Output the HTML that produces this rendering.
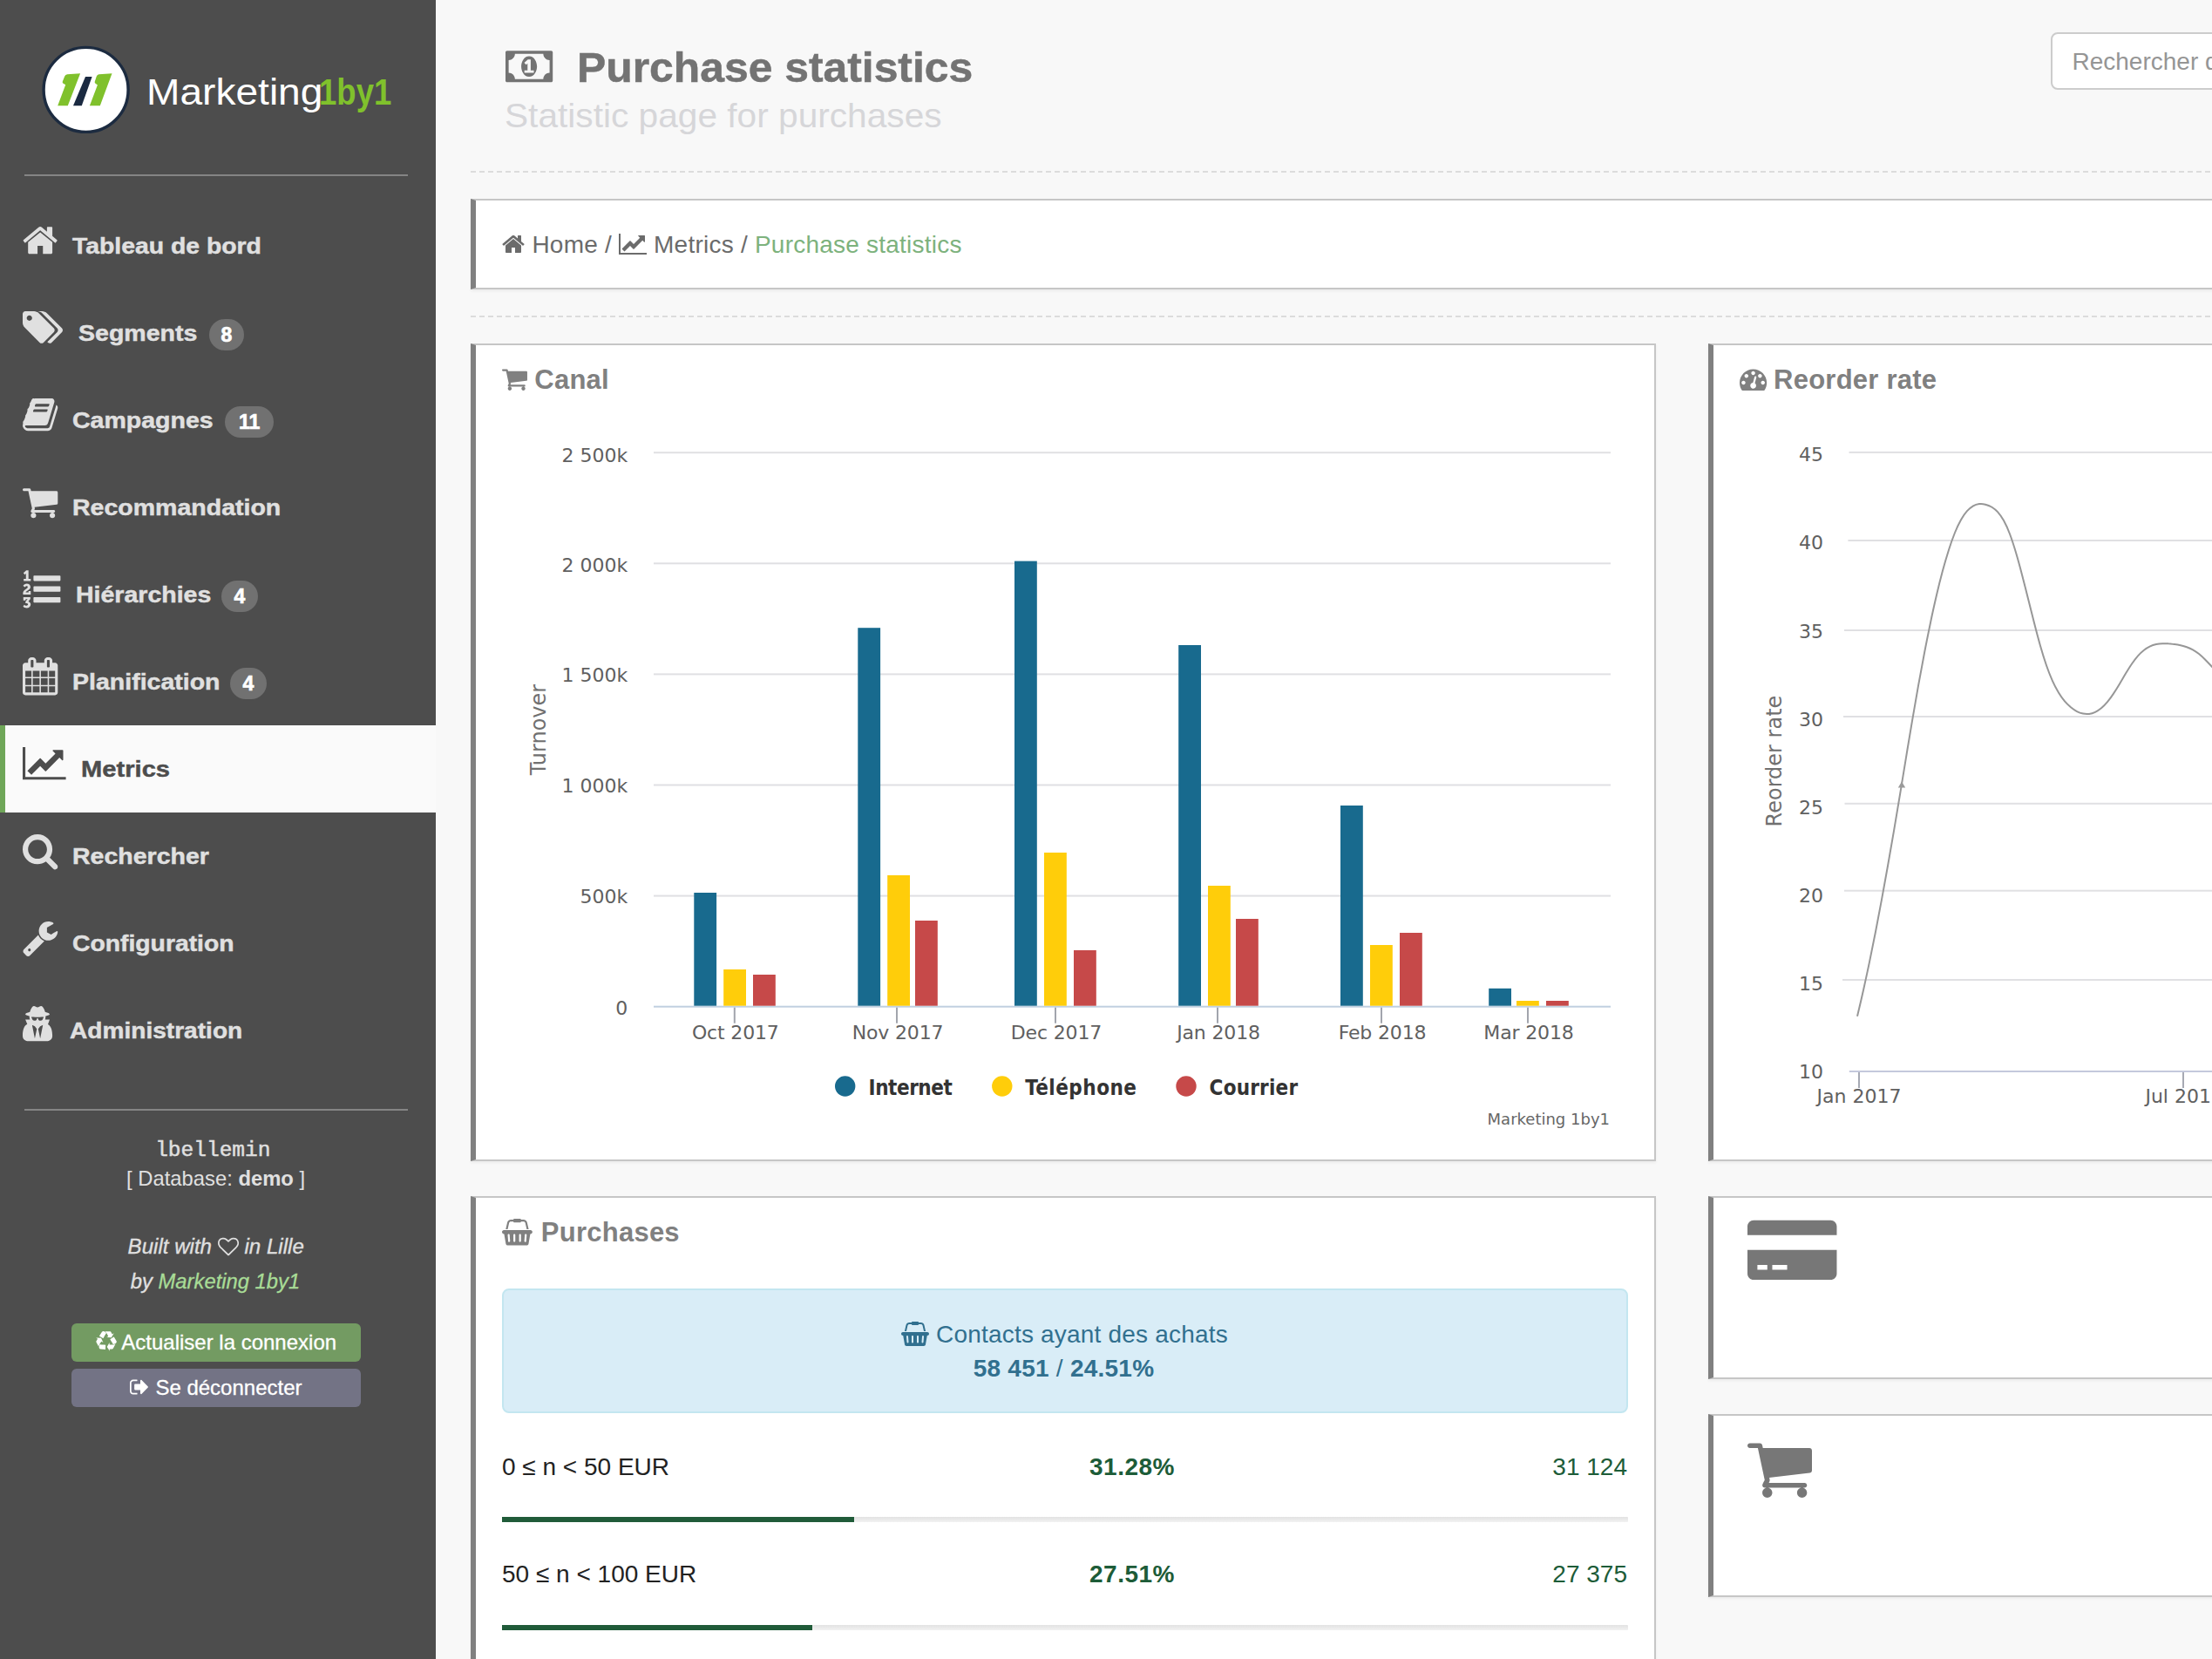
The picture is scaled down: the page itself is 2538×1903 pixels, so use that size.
<!DOCTYPE html>
<html lang="fr"><head><meta charset="utf-8"><title>Purchase statistics</title>
<style>
html,body{margin:0;padding:0;}
body{width:2538px;height:1903px;overflow:hidden;background:#f8f8f8;position:relative;font-family:"Liberation Sans",sans-serif;}
.t{position:absolute;white-space:nowrap;line-height:1;}
.sans{font-family:"Liberation Sans",sans-serif;}
.dv{font-family:"DejaVu Sans",sans-serif;}
.mono{font-family:"Liberation Mono",monospace;}
.b{font-weight:bold;}
.ic{position:absolute;display:block;overflow:visible;}
.abs{position:absolute;}
#side{position:absolute;left:0;top:0;width:500px;height:1903px;background:#4d4d4d;}
.hr{position:absolute;left:28px;width:440px;height:2px;background:#858585;}
.mi{color:#e0e0e0;font-weight:bold;}
.badge{position:absolute;height:36px;border-radius:18px;background:#717171;color:#fff;font-weight:bold;font-size:23px;line-height:36px;text-align:center;-webkit-text-stroke:0.7px #fff;}
.panel{position:absolute;background:#fff;border:2px solid #c6c6c6;border-left:6px solid #808080;box-sizing:border-box;box-shadow:0 2px 3px rgba(0,0,0,.05);}
.dash{position:absolute;left:540px;right:0;height:2px;background:repeating-linear-gradient(90deg,#dcdcdc 0,#dcdcdc 6px,transparent 6px,transparent 10px);}
.btn{position:absolute;left:82px;width:332px;height:43.5px;border-radius:6px;}
svg text{font-family:"DejaVu Sans",sans-serif;}
</style></head><body>

<div id="side">
<svg class="abs" style="left:0;top:0" width="200" height="200" viewBox="0 0 200 200">
<circle cx="98.6" cy="102.9" r="48.5" fill="#fff" stroke="#1c2b40" stroke-width="3.4"/>
<path fill="#80c12c" d="M77.2,85.2 L92.1,84.2 L77.8,121.3 L66.2,121.3 L75.2,97.3 L72.2,95.4 Q71.4,94.8 71.8,93.6 L74.2,87.4 Q75,85.4 77.2,85.2Z"/>
<path fill="#1b2a41" d="M98,88 L105.6,88 L93.8,121.3 L84,121.3Z"/>
<path fill="#80c12c" d="M113.5,85.2 L128.5,84.2 L114.8,121.3 L102.9,121.3 L111.9,97.5 L109.2,95.4 Q108.4,94.8 108.8,93.6 L110.8,87.4 Q111.5,85.4 113.5,85.2Z"/>
</svg>
<div class="t sans" style="left:168px;top:83.6px;font-size:43px;color:#fff;"><span id="lg1" style="display:inline-block;transform-origin:0 0;transform:scaleX(1.072)">Marketing</span></div>
<div class="t sans b" style="left:366.3px;top:83.6px;font-size:43px;color:#80c12c;"><span id="lg2" style="display:inline-block;transform-origin:0 0;transform:scaleX(0.85)">1by1</span></div>
<div class="hr" style="top:199.5px"></div>
<div class="abs" style="left:0;top:832px;width:500px;height:100px;background:#fafafa;border-left:6px solid #6fa658;box-sizing:border-box"></div>
<svg class="ic" style="left:26.40px;top:253.80px;width:40.30px;height:43.40px;" viewBox="0 0 1664 1792"><path fill="#e0e0e0" d="M1408 992C1408 990 1408 988 1407 986L832 512L257 986C257 988 256 990 256 992V1472C256 1507 285 1536 320 1536H704V1152H960V1536H1344C1379 1536 1408 1507 1408 1472ZM1631 923C1642 910 1640 889 1627 878L1408 696V288C1408 270 1394 256 1376 256H1184C1166 256 1152 270 1152 288V483L908 279C866 244 798 244 756 279L37 878C24 889 22 910 33 923L95 997C100 1003 108 1007 116 1008C125 1009 133 1006 140 1001L832 424L1524 1001C1530 1006 1537 1008 1545 1008C1546 1008 1547 1008 1548 1008C1556 1007 1564 1003 1569 997L1631 923Z"/></svg>
<div class="t sans b" id="m0" style="left:83.4px;top:268.57px;font-size:26.5px;color:#e0e0e0;-webkit-text-stroke:0.45px #e0e0e0;transform-origin:0 0;transform:scaleX(1.07)">Tableau de bord</div>
<svg class="ic" style="left:26.40px;top:353.80px;width:46.50px;height:43.40px;" viewBox="0 0 1920 1792"><path fill="#e0e0e0" d="M448 448C448 519 391 576 320 576C249 576 192 519 192 448C192 377 249 320 320 320C391 320 448 377 448 448ZM1515 1024C1515 990 1501 957 1478 933L763 219C712 168 615 128 544 128H128C58 128 0 186 0 256V672C0 743 40 840 91 890L806 1606C829 1629 862 1643 896 1643C930 1643 963 1629 987 1606L1478 1114C1501 1091 1515 1058 1515 1024ZM1899 1024C1899 990 1885 957 1862 933L1147 219C1096 168 999 128 928 128H704C775 128 872 168 923 219L1638 933C1661 957 1675 990 1675 1024C1675 1058 1661 1091 1638 1114L1168 1584C1202 1619 1228 1643 1280 1643C1314 1643 1347 1629 1371 1606L1862 1114C1885 1091 1899 1058 1899 1024Z"/></svg>
<div class="t sans b" id="m1" style="left:89.6px;top:368.57px;font-size:26.5px;color:#e0e0e0;-webkit-text-stroke:0.45px #e0e0e0;transform-origin:0 0;transform:scaleX(1.076)">Segments</div>
<div class="badge" id="b1" style="left:240px;top:366px;width:40px">8</div>
<svg class="ic" style="left:26.40px;top:454.30px;width:40.30px;height:43.40px;" viewBox="0 0 1664 1792"><path fill="#e0e0e0" d="M1639 478C1624 458 1603 444 1580 435C1581 453 1581 473 1575 492L1275 1479C1264 1515 1221 1536 1184 1536H261C206 1536 137 1524 117 1466C109 1444 110 1435 118 1423C127 1411 143 1408 156 1408H1025C1152 1408 1178 1374 1225 1220L1499 314C1513 267 1507 220 1481 184C1456 149 1414 128 1367 128H606C589 128 572 133 555 137L556 134C429 98 421 235 379 297C363 320 339 340 335 359C332 377 342 394 340 411C334 464 294 559 270 592C255 612 233 622 226 645C220 661 230 684 228 705C223 752 188 841 161 887C151 905 132 919 127 938C122 955 132 977 127 996C116 1048 82 1129 52 1179C36 1206 15 1223 11 1247C9 1259 18 1272 17 1288C16 1312 12 1332 10 1352C-4 1390 -4 1434 12 1479C49 1583 158 1664 260 1664H1183C1269 1664 1357 1598 1382 1513L1657 607C1671 561 1664 514 1639 478ZM575 480 596 416C602 398 621 384 638 384H1246C1264 384 1274 398 1268 416L1247 480C1241 498 1222 512 1205 512H597C579 512 569 498 575 480ZM492 736 513 672C519 654 538 640 555 640H1163C1181 640 1191 654 1185 672L1164 736C1158 754 1139 768 1122 768H514C496 768 486 754 492 736Z"/></svg>
<div class="t sans b" id="m2" style="left:83.4px;top:469.07px;font-size:26.5px;color:#e0e0e0;-webkit-text-stroke:0.45px #e0e0e0;transform-origin:0 0;transform:scaleX(1.076)">Campagnes</div>
<div class="badge" id="b2" style="left:258.4px;top:466px;width:55.6px">11</div>
<svg class="ic" style="left:26.40px;top:554.30px;width:40.30px;height:43.40px;" viewBox="0 0 1664 1792"><path fill="#e0e0e0" d="M640 1536C640 1466 582 1408 512 1408C442 1408 384 1466 384 1536C384 1606 442 1664 512 1664C582 1664 640 1606 640 1536ZM1536 1536C1536 1466 1478 1408 1408 1408C1338 1408 1280 1466 1280 1536C1280 1606 1338 1664 1408 1664C1478 1664 1536 1606 1536 1536ZM1664 448C1664 413 1635 384 1600 384H399C389 336 387 256 320 256H64C29 256 0 285 0 320C0 355 29 384 64 384H268L445 1207C429 1238 384 1313 384 1344C384 1379 413 1408 448 1408H1472C1507 1408 1536 1379 1536 1344C1536 1309 1507 1280 1472 1280H552C562 1260 576 1239 576 1216C576 1192 568 1169 563 1146L1607 1024C1639 1020 1664 992 1664 960Z"/></svg>
<div class="t sans b" id="m3" style="left:83.4px;top:569.07px;font-size:26.5px;color:#e0e0e0;-webkit-text-stroke:0.45px #e0e0e0;transform-origin:0 0;transform:scaleX(1.076)">Recommandation</div>
<svg class="ic" style="left:26.40px;top:654.30px;width:43.40px;height:43.40px;" viewBox="0 0 1792 1792"><path fill="#e0e0e0" d="M381 1620C381 1551 337 1499 270 1483L365 1368V1280H32V1432H138V1379C170 1379 203 1377 235 1377V1378C192 1417 159 1468 123 1514L149 1570C190 1567 254 1570 254 1626C254 1666 217 1683 182 1683C144 1683 103 1663 76 1638L19 1726C64 1771 128 1792 191 1792C295 1792 381 1730 381 1620ZM383 993H278V1053H151C154 975 371 942 371 794C371 695 291 640 198 640C122 640 54 679 21 748L106 807C123 779 152 749 187 749C220 749 241 767 241 801C241 885 15 913 15 1098C15 1116 18 1134 21 1152H383ZM1792 1312C1792 1294 1777 1280 1760 1280H544C526 1280 512 1294 512 1312V1504C512 1521 526 1536 544 1536H1760C1777 1536 1792 1521 1792 1504ZM384 413H276V9H170L34 136L105 212C124 195 144 180 155 158H157V170C157 251 156 332 156 413H49V512H384ZM1792 800C1792 782 1777 768 1760 768H544C526 768 512 782 512 800V992C512 1009 526 1024 544 1024H1760C1777 1024 1792 1009 1792 992ZM1792 288C1792 271 1777 256 1760 256H544C526 256 512 271 512 288V480C512 497 526 512 544 512H1760C1777 512 1792 497 1792 480Z"/></svg>
<div class="t sans b" id="m4" style="left:86.5px;top:669.07px;font-size:26.5px;color:#e0e0e0;-webkit-text-stroke:0.45px #e0e0e0;transform-origin:0 0;transform:scaleX(1.076)">Hiérarchies</div>
<div class="badge" id="b4" style="left:254px;top:666px;width:42px">4</div>
<svg class="ic" style="left:26.40px;top:754.30px;width:40.30px;height:43.40px;" viewBox="0 0 1664 1792"><path fill="#e0e0e0" d="M128 1664V1376H416V1664ZM480 1664V1376H800V1664ZM128 1312V992H416V1312ZM480 1312V992H800V1312ZM128 928V640H416V928ZM864 1664V1376H1184V1664ZM480 928V640H800V928ZM1248 1664V1376H1536V1664ZM864 1312V992H1184V1312ZM512 448C512 465 497 480 480 480H416C399 480 384 465 384 448V160C384 143 399 128 416 128H480C497 128 512 143 512 160V448ZM1248 1312V992H1536V1312ZM864 928V640H1184V928ZM1248 928V640H1536V928ZM1280 448C1280 465 1265 480 1248 480H1184C1167 480 1152 465 1152 448V160C1152 143 1167 128 1184 128H1248C1265 128 1280 143 1280 160V448ZM1664 384C1664 314 1606 256 1536 256H1408V160C1408 72 1336 0 1248 0H1184C1096 0 1024 72 1024 160V256H640V160C640 72 568 0 480 0H416C328 0 256 72 256 160V256H128C58 256 0 314 0 384V1664C0 1734 58 1792 128 1792H1536C1606 1792 1664 1734 1664 1664Z"/></svg>
<div class="t sans b" id="m5" style="left:83.4px;top:769.07px;font-size:26.5px;color:#e0e0e0;-webkit-text-stroke:0.45px #e0e0e0;transform-origin:0 0;transform:scaleX(1.076)">Planification</div>
<div class="badge" id="b5" style="left:264px;top:766px;width:42px">4</div>
<svg class="ic" style="left:26.40px;top:854.30px;width:49.60px;height:43.40px;" viewBox="0 0 2048 1792"><path fill="#4d4d4d" d="M2048 1536H128V128H0V1664H2048ZM1920 288C1920 270 1906 256 1888 256H1453C1425 256 1410 290 1431 311L1552 432L1088 896L855 663C842 650 822 650 809 663L224 1248L416 1440L832 1024L1065 1257C1078 1270 1098 1270 1111 1257L1744 624L1865 745C1886 766 1920 751 1920 723Z"/></svg>
<div class="t sans b" id="m6" style="left:92.7px;top:869.07px;font-size:26.5px;color:#4d4d4d;-webkit-text-stroke:0.45px #4d4d4d;transform-origin:0 0;transform:scaleX(1.1)">Metrics</div>
<svg class="ic" style="left:26.40px;top:954.30px;width:40.30px;height:43.40px;" viewBox="0 0 1664 1792"><path fill="#e0e0e0" d="M1152 832C1152 1079 951 1280 704 1280C457 1280 256 1079 256 832C256 585 457 384 704 384C951 384 1152 585 1152 832ZM1664 1664C1664 1630 1650 1597 1627 1574L1284 1231C1365 1114 1408 974 1408 832C1408 443 1093 128 704 128C315 128 0 443 0 832C0 1221 315 1536 704 1536C846 1536 986 1493 1103 1412L1446 1754C1469 1778 1502 1792 1536 1792C1606 1792 1664 1734 1664 1664Z"/></svg>
<div class="t sans b" id="m7" style="left:83.4px;top:969.07px;font-size:26.5px;color:#e0e0e0;-webkit-text-stroke:0.45px #e0e0e0;transform-origin:0 0;transform:scaleX(1.076)">Rechercher</div>
<svg class="ic" style="left:26.40px;top:1054.30px;width:40.30px;height:43.40px;" viewBox="0 0 1664 1792"><path fill="#e0e0e0" d="M384 1472C384 1507 355 1536 320 1536C285 1536 256 1507 256 1472C256 1437 285 1408 320 1408C355 1408 384 1437 384 1472ZM1028 1052C897 1000 792 895 740 764L59 1445C35 1469 21 1502 21 1536C21 1570 35 1603 59 1626L165 1734C189 1757 222 1771 256 1771C290 1771 323 1757 346 1734L1028 1052ZM1662 617C1662 597 1650 582 1630 582C1610 582 1378 728 1345 747L1152 640V416L1445 247C1454 241 1461 230 1461 219C1461 207 1455 198 1445 191C1384 150 1289 128 1216 128C969 128 768 329 768 576C768 823 969 1024 1216 1024C1405 1024 1576 901 1639 723C1650 691 1662 650 1662 617Z"/></svg>
<div class="t sans b" id="m8" style="left:83.4px;top:1069.07px;font-size:26.5px;color:#e0e0e0;-webkit-text-stroke:0.45px #e0e0e0;transform-origin:0 0;transform:scaleX(1.068)">Configuration</div>
<svg class="ic" style="left:26.40px;top:1154.30px;width:37.20px;height:43.40px;" viewBox="0 0 1536 1792"><path fill="#e0e0e0" d="M576 1536 448 896 576 960 672 1088ZM832 1536 736 1088 832 960 960 896ZM992 526C991 535 990 544 988 553C982 561 977 558 973 570C947 641 935 696 845 696C716 696 752 577 710 577H698C656 577 692 696 563 696C473 696 461 641 435 570C431 558 426 561 420 553C418 544 417 535 416 526C417 524 418 522 420 520C429 513 501 512 516 512C573 512 627 520 683 531C690 533 697 533 704 533C711 533 718 533 725 531C781 520 835 512 892 512C907 512 979 513 988 520C990 522 991 524 992 526ZM1408 1405C1408 1227 1377 958 1198 865L1280 640H1066C1084 588 1091 534 1086 480C1125 472 1280 440 1280 384C1280 325 1110 293 1070 285C1049 210 999 96 948 37C928 14 903 0 872 0C812 0 764 62 704 62C644 62 596 0 536 0C505 0 480 14 460 37C409 96 359 210 338 285C298 293 128 325 128 384C128 440 283 472 322 480C321 490 320 501 320 512C320 556 328 599 342 640H128L218 860C32 950 0 1224 0 1405C0 1568 107 1664 267 1664H1141C1301 1664 1408 1568 1408 1405Z"/></svg>
<div class="t sans b" id="m9" style="left:80.3px;top:1169.07px;font-size:26.5px;color:#e0e0e0;-webkit-text-stroke:0.45px #e0e0e0;transform-origin:0 0;transform:scaleX(1.06)">Administration</div>
<div class="hr" style="top:1272px"></div>
<div class="t mono " style="top:1308.42px;font-size:24.5px;left:-355.70px;width:1200px;text-align:center;color:#e0e0e0;-webkit-text-stroke:0.45px #e0e0e0;">lbellemin</div>
<div class="t sans " style="top:1339.85px;font-size:23.8px;left:-352.40px;width:1200px;text-align:center;color:#e0e0e0;">[ Database: <b>demo</b> ]</div>
<div class="t sans " style="top:1417.60px;font-size:24.1px;left:-352.30px;width:1200px;text-align:center;color:#e0e0e0;-webkit-text-stroke:0.3px #e0e0e0;"><i>Built with <svg style="display:inline-block;width:24.10px;height:24.10px;vertical-align:-3.44px;" viewBox="0 0 1792 1792"><path fill="#e0e0e0" d="M1664 596C1664 779 1479 949 1476 952L896 1511L315 951C313 949 128 779 128 596C128 315 318 256 478 256C627 256 795 417 847 479C871 508 921 508 945 479C997 417 1165 256 1314 256C1474 256 1664 315 1664 596ZM1792 596C1792 303 1613 128 1314 128C1139 128 975 266 896 344C817 266 653 128 478 128C179 128 0 303 0 596C0 836 220 1037 228 1044L852 1646C864 1658 880 1664 896 1664C912 1664 928 1658 940 1646L1563 1046C1572 1037 1792 836 1792 596Z"/></svg> in Lille</i></div>
<div class="t sans " style="top:1457.85px;font-size:23.8px;left:-353.00px;width:1200px;text-align:center;color:#e0e0e0;-webkit-text-stroke:0.3px #e0e0e0;"><i>by <span style="color:#a8dc96;-webkit-text-stroke:0.3px #a8dc96">Marketing 1by1</span></i></div>
<div class="btn" style="top:1517.8px;height:44px;background:#739b62"></div>
<div class="t sans " style="top:1527.18px;font-size:24px;left:-352.00px;width:1200px;text-align:center;color:#fff;-webkit-text-stroke:0.3px #fff;"><svg style="display:inline-block;width:24.00px;height:24.00px;vertical-align:-3.43px;" viewBox="0 0 1792 1792"><path fill="#fff" d="M836 1169C404 1153 327 1141 327 1141C297 1230 245 1340 285 1433C304 1477 347 1526 399 1530L819 1559L821 1537L836 1169ZM449 583 16 566 156 652C77 777 42 840 42 840C42 840 7 903 46 961L236 1318C236 1318 257 1127 482 870L629 962ZM1680 1100C1680 1100 1510 1191 1171 1150L1164 977L953 1339L1183 1706L1175 1542C1323 1537 1394 1530 1394 1530C1394 1530 1466 1524 1492 1459L1680 1100ZM895 176C831 107 759 10 659 1C610 -4 547 12 519 56L294 412L313 424L630 611C848 238 895 176 895 176ZM1550 483 1531 494 1218 689C1449 1054 1483 1125 1483 1125C1573 1100 1693 1080 1747 996C1773 954 1789 891 1762 846ZM1407 257C1334 128 1295 67 1295 67C1295 67 1257 7 1187 13L782 12C782 12 941 122 1061 441L910 527L1329 547L1549 174Z"/></svg> Actualiser la connexion</div>
<div class="btn" style="top:1570px;background:#737385"></div>
<div class="t sans " style="top:1578.68px;font-size:24px;left:-352.00px;width:1200px;text-align:center;color:#fff;-webkit-text-stroke:0.3px #fff;"><svg style="display:inline-block;width:22.29px;height:24.00px;vertical-align:-3.43px;" viewBox="0 0 1664 1792"><path fill="#fff" d="M640 1440C640 1403 601 1408 576 1408H288C200 1408 128 1336 128 1248V544C128 456 200 384 288 384H608C653 384 640 316 640 288C640 271 625 256 608 256H288C129 256 0 385 0 544V1248C0 1407 129 1536 288 1536H608C653 1536 640 1468 640 1440ZM1568 896C1568 879 1561 863 1549 851L1005 307C993 295 977 288 960 288C925 288 896 317 896 352V640H448C413 640 384 669 384 704V1088C384 1123 413 1152 448 1152H896V1440C896 1475 925 1504 960 1504C977 1504 993 1497 1005 1485L1549 941C1561 929 1568 913 1568 896Z"/></svg> Se déconnecter</div>
</div>
<svg class="ic" style="left:579.60px;top:50.63px;width:54.21px;height:50.60px;" viewBox="0 0 1920 1792"><path fill="#737373" d="M768 1152V1056H896V768H894C878 793 863 804 839 825L762 745L910 608H1024V1056H1152V1152ZM1280 896C1280 714 1170 480 960 480C750 480 640 714 640 896C640 1078 750 1312 960 1312C1170 1312 1280 1078 1280 896ZM1792 1152C1651 1152 1536 1267 1536 1408H384C384 1267 269 1152 128 1152V640C269 640 384 525 384 384H1536C1536 525 1651 640 1792 640V1152ZM1920 320C1920 285 1891 256 1856 256H64C29 256 0 285 0 320V1472C0 1507 29 1536 64 1536H1856C1891 1536 1920 1507 1920 1472Z"/></svg>
<div class="t sans b" style="top:53.20px;font-size:48.2px;left:662.20px;color:#737373;-webkit-text-stroke:0.5px #737373;transform-origin:0 0;transform:scaleX(1.034);">Purchase statistics</div>
<div class="t sans " style="top:112.98px;font-size:39.6px;left:578.80px;color:#d6d6d9;transform-origin:0 0;transform:scaleX(1.027);">Statistic page for purchases</div>
<div class="abs" style="left:2352.8px;top:36.8px;width:300px;height:66.6px;box-sizing:border-box;border:2px solid #ccc;border-radius:8px;background:#fff"></div>
<div class="t sans " style="top:56.60px;font-size:28px;left:2377.50px;color:#959595;">Rechercher dans</div>
<div class="dash" style="top:196px"></div>
<div class="dash" style="top:362px"></div>
<div class="panel" style="left:540px;top:228px;width:2100px;height:103.5px"></div>
<div class="t sans " style="top:266.30px;font-size:28px;left:576.40px;color:#6b6b6b;letter-spacing:0.23px;"><svg style="display:inline-block;width:26.00px;height:28.00px;vertical-align:-4.00px;" viewBox="0 0 1664 1792"><path fill="#6b6b6b" d="M1408 992C1408 990 1408 988 1407 986L832 512L257 986C257 988 256 990 256 992V1472C256 1507 285 1536 320 1536H704V1152H960V1536H1344C1379 1536 1408 1507 1408 1472ZM1631 923C1642 910 1640 889 1627 878L1408 696V288C1408 270 1394 256 1376 256H1184C1166 256 1152 270 1152 288V483L908 279C866 244 798 244 756 279L37 878C24 889 22 910 33 923L95 997C100 1003 108 1007 116 1008C125 1009 133 1006 140 1001L832 424L1524 1001C1530 1006 1537 1008 1545 1008C1546 1008 1547 1008 1548 1008C1556 1007 1564 1003 1569 997L1631 923Z"/></svg> Home / <svg style="display:inline-block;width:32.00px;height:28.00px;vertical-align:-4.00px;" viewBox="0 0 2048 1792"><path fill="#6b6b6b" d="M2048 1536H128V128H0V1664H2048ZM1920 288C1920 270 1906 256 1888 256H1453C1425 256 1410 290 1431 311L1552 432L1088 896L855 663C842 650 822 650 809 663L224 1248L416 1440L832 1024L1065 1257C1078 1270 1098 1270 1111 1257L1744 624L1865 745C1886 766 1920 751 1920 723Z"/></svg> Metrics / <span style="color:#7db27d">Purchase statistics</span></div>
<div class="panel" style="left:540px;top:394px;width:1360px;height:938px"></div>
<svg class="ic" style="left:576.40px;top:419.26px;width:28.97px;height:31.20px;" viewBox="0 0 1664 1792"><path fill="#808080" d="M640 1536C640 1466 582 1408 512 1408C442 1408 384 1466 384 1536C384 1606 442 1664 512 1664C582 1664 640 1606 640 1536ZM1536 1536C1536 1466 1478 1408 1408 1408C1338 1408 1280 1466 1280 1536C1280 1606 1338 1664 1408 1664C1478 1664 1536 1606 1536 1536ZM1664 448C1664 413 1635 384 1600 384H399C389 336 387 256 320 256H64C29 256 0 285 0 320C0 355 29 384 64 384H268L445 1207C429 1238 384 1313 384 1344C384 1379 413 1408 448 1408H1472C1507 1408 1536 1379 1536 1344C1536 1309 1507 1280 1472 1280H552C562 1260 576 1239 576 1216C576 1192 568 1169 563 1146L1607 1024C1639 1020 1664 992 1664 960Z"/></svg>
<div class="t sans b" style="top:419.76px;font-size:31px;left:613.30px;color:#808080;letter-spacing:0.25px;">Canal</div>
<div class="panel" style="left:1960px;top:394px;width:700px;height:937.5px"></div>
<svg class="ic" style="left:1995.50px;top:419.26px;width:31.20px;height:31.20px;" viewBox="0 0 1792 1792"><path fill="#808080" d="M384 1152C384 1223 327 1280 256 1280C185 1280 128 1223 128 1152C128 1081 185 1024 256 1024C327 1024 384 1081 384 1152ZM576 704C576 775 519 832 448 832C377 832 320 775 320 704C320 633 377 576 448 576C519 576 576 633 576 704ZM1004 1185C1069 1230 1103 1312 1082 1393C1055 1495 950 1557 847 1530C745 1503 683 1398 710 1295C732 1214 801 1159 880 1153L981 771C990 737 1025 716 1059 725C1093 734 1113 769 1105 803ZM1664 1152C1664 1223 1607 1280 1536 1280C1465 1280 1408 1223 1408 1152C1408 1081 1465 1024 1536 1024C1607 1024 1664 1081 1664 1152ZM1024 512C1024 583 967 640 896 640C825 640 768 583 768 512C768 441 825 384 896 384C967 384 1024 441 1024 512ZM1472 704C1472 775 1415 832 1344 832C1273 832 1216 775 1216 704C1216 633 1273 576 1344 576C1415 576 1472 633 1472 704ZM1792 1152C1792 658 1390 256 896 256C402 256 0 658 0 1152C0 1324 49 1491 141 1635C153 1653 173 1664 195 1664H1597C1619 1664 1639 1653 1651 1635C1743 1490 1792 1324 1792 1152Z"/></svg>
<div class="t sans b" style="top:419.76px;font-size:31px;left:2035.00px;color:#808080;letter-spacing:0.25px;">Reorder rate</div>
<div class="panel" style="left:540px;top:1372px;width:1360px;height:700px"></div>
<svg class="ic" style="left:576.40px;top:1398.36px;width:34.86px;height:30.50px;" viewBox="0 0 2048 1792"><path fill="#808080" d="M1920 768H128C57 768 0 825 0 896C0 967 57 1024 128 1024H143L258 1686C269 1747 322 1792 384 1792H1664C1726 1792 1779 1747 1790 1686L1905 1024H1920C1991 1024 2048 967 2048 896C2048 825 1991 768 1920 768ZM485 1568C483 1568 482 1568 480 1568C447 1568 419 1542 416 1509L384 1093C381 1058 408 1027 443 1024C478 1021 509 1048 512 1083L544 1499C547 1534 520 1565 485 1568ZM896 1504C896 1539 867 1568 832 1568C797 1568 768 1539 768 1504V1088C768 1053 797 1024 832 1024C867 1024 896 1053 896 1088ZM1280 1504C1280 1539 1251 1568 1216 1568C1181 1568 1152 1539 1152 1504V1088C1152 1053 1181 1024 1216 1024C1251 1024 1280 1053 1280 1088ZM1632 1509C1629 1542 1601 1568 1568 1568C1566 1568 1565 1568 1563 1568C1528 1565 1501 1534 1504 1499L1536 1083C1539 1048 1570 1021 1605 1024C1640 1027 1667 1058 1664 1093ZM476 292C490 233 541 192 601 192H768C768 227 797 256 832 256H1216C1251 256 1280 227 1280 192H1447C1507 192 1558 233 1572 292L1665 704H1797L1696 263C1670 146 1567 64 1447 64H1280C1280 29 1251 0 1216 0H832C797 0 768 29 768 64H601C481 64 378 146 352 263L251 704H383Z"/></svg>
<div class="t sans b" style="top:1398.26px;font-size:31px;left:620.80px;color:#808080;letter-spacing:0.25px;">Purchases</div>
<div class="abs" style="left:576px;top:1477.9px;width:1292px;height:143.6px;box-sizing:border-box;background:#d9edf7;border:2px solid #c3e6f0;border-radius:8px"></div>
<div class="t sans " style="top:1515.50px;font-size:28px;left:621.50px;width:1200px;text-align:center;color:#31708f;letter-spacing:0.2px;"><svg style="display:inline-block;width:32.00px;height:28.00px;vertical-align:-4.00px;" viewBox="0 0 2048 1792"><path fill="#31708f" d="M1920 768H128C57 768 0 825 0 896C0 967 57 1024 128 1024H143L258 1686C269 1747 322 1792 384 1792H1664C1726 1792 1779 1747 1790 1686L1905 1024H1920C1991 1024 2048 967 2048 896C2048 825 1991 768 1920 768ZM485 1568C483 1568 482 1568 480 1568C447 1568 419 1542 416 1509L384 1093C381 1058 408 1027 443 1024C478 1021 509 1048 512 1083L544 1499C547 1534 520 1565 485 1568ZM896 1504C896 1539 867 1568 832 1568C797 1568 768 1539 768 1504V1088C768 1053 797 1024 832 1024C867 1024 896 1053 896 1088ZM1280 1504C1280 1539 1251 1568 1216 1568C1181 1568 1152 1539 1152 1504V1088C1152 1053 1181 1024 1216 1024C1251 1024 1280 1053 1280 1088ZM1632 1509C1629 1542 1601 1568 1568 1568C1566 1568 1565 1568 1563 1568C1528 1565 1501 1534 1504 1499L1536 1083C1539 1048 1570 1021 1605 1024C1640 1027 1667 1058 1664 1093ZM476 292C490 233 541 192 601 192H768C768 227 797 256 832 256H1216C1251 256 1280 227 1280 192H1447C1507 192 1558 233 1572 292L1665 704H1797L1696 263C1670 146 1567 64 1447 64H1280C1280 29 1251 0 1216 0H832C797 0 768 29 768 64H601C481 64 378 146 352 263L251 704H383Z"/></svg> Contacts ayant des achats</div>
<div class="t sans " style="top:1555.60px;font-size:28px;left:620.50px;width:1200px;text-align:center;color:#31708f;letter-spacing:0.25px;"><b>58 451</b> / <b>24.51%</b></div>
<div class="t sans " style="top:1668.50px;font-size:28px;left:576.00px;color:#222;">0 ≤ n &lt; 50 EUR</div>
<div class="t sans b" style="top:1668.50px;font-size:28px;left:1250.00px;color:#1d5c38;letter-spacing:0.5px;">31.28%</div>
<div class="t sans " style="top:1668.50px;font-size:28px;right:671.00px;color:#1d5c38;">31 124</div>
<div class="abs" style="left:576px;top:1739.6px;width:1292px;height:6px;background:linear-gradient(#e2e2e2,#f2f2f2);border-radius:1px"></div>
<div class="abs" style="left:576px;top:1739.6px;width:404.0px;height:6px;background:#205b39"></div>
<div class="t sans " style="top:1792.30px;font-size:28px;left:576.00px;color:#222;">50 ≤ n &lt; 100 EUR</div>
<div class="t sans b" style="top:1792.30px;font-size:28px;left:1250.00px;color:#1d5c38;letter-spacing:0.5px;">27.51%</div>
<div class="t sans " style="top:1792.30px;font-size:28px;right:671.00px;color:#1d5c38;">27 375</div>
<div class="abs" style="left:576px;top:1864px;width:1292px;height:6px;background:linear-gradient(#e2e2e2,#f2f2f2);border-radius:1px"></div>
<div class="abs" style="left:576px;top:1864px;width:355.7px;height:6px;background:#205b39"></div>
<div class="panel" style="left:1960px;top:1372px;width:700px;height:210px"></div>
<svg class="ic" style="left:2005.20px;top:1393.69px;width:102.47px;height:79.70px;" viewBox="0 0 2304 1792"><path fill="#777" d="M0 1504C0 1592 72 1664 160 1664H2144C2232 1664 2304 1592 2304 1504V896H0ZM640 1280H1024V1408H640ZM256 1280H512V1408H256ZM2144 128H160C72 128 0 200 0 288V512H2304V288C2304 200 2232 128 2144 128Z"/></svg>
<div class="panel" style="left:1960px;top:1621.5px;width:700px;height:210px"></div>
<svg class="ic" style="left:2005.20px;top:1643.59px;width:74.01px;height:79.70px;" viewBox="0 0 1664 1792"><path fill="#777" d="M640 1536C640 1466 582 1408 512 1408C442 1408 384 1466 384 1536C384 1606 442 1664 512 1664C582 1664 640 1606 640 1536ZM1536 1536C1536 1466 1478 1408 1408 1408C1338 1408 1280 1466 1280 1536C1280 1606 1338 1664 1408 1664C1478 1664 1536 1606 1536 1536ZM1664 448C1664 413 1635 384 1600 384H399C389 336 387 256 320 256H64C29 256 0 285 0 320C0 355 29 384 64 384H268L445 1207C429 1238 384 1313 384 1344C384 1379 413 1408 448 1408H1472C1507 1408 1536 1379 1536 1344C1536 1309 1507 1280 1472 1280H552C562 1260 576 1239 576 1216C576 1192 568 1169 563 1146L1607 1024C1639 1020 1664 992 1664 960Z"/></svg>
<svg class="abs" style="left:0;top:0" width="2538" height="1903" viewBox="0 0 2538 1903">
<rect x="750" y="518.2" width="1098" height="2" fill="#e0e0e3"/>
<rect x="750" y="645.3" width="1098" height="2" fill="#e0e0e3"/>
<rect x="750" y="772.4" width="1098" height="2" fill="#e0e0e3"/>
<rect x="750" y="899.5" width="1098" height="2" fill="#e0e0e3"/>
<rect x="750" y="1026.6" width="1098" height="2" fill="#e0e0e3"/>
<rect x="750" y="1153.7" width="1098" height="2" fill="#c0d0e0"/>
<text x="720.3" y="530.1" font-size="22" fill="#606060" text-anchor="end">2 500k</text>
<text x="720.3" y="656.1" font-size="22" fill="#606060" text-anchor="end">2 000k</text>
<text x="720.3" y="781.8" font-size="22" fill="#606060" text-anchor="end">1 500k</text>
<text x="720.3" y="909.4" font-size="22" fill="#606060" text-anchor="end">1 000k</text>
<text x="720.3" y="1035.5" font-size="22" fill="#606060" text-anchor="end">500k</text>
<text x="720.3" y="1163.5" font-size="22" fill="#606060" text-anchor="end">0</text>
<rect x="796.3" y="1024.0" width="25.8" height="129.7" fill="#186a8e"/>
<rect x="830.2" y="1112.0" width="25.8" height="41.7" fill="#ffcd0a"/>
<rect x="864.0" y="1118.0" width="25.8" height="35.7" fill="#c64949"/>
<rect x="984.3" y="720.2" width="25.8" height="433.5" fill="#186a8e"/>
<rect x="1018.2" y="1004.0" width="25.8" height="149.7" fill="#ffcd0a"/>
<rect x="1050.0" y="1056.0" width="25.8" height="97.7" fill="#c64949"/>
<rect x="1164.0" y="643.6" width="25.8" height="510.1" fill="#186a8e"/>
<rect x="1198.0" y="978.0" width="25.8" height="175.7" fill="#ffcd0a"/>
<rect x="1232.0" y="1090.0" width="25.8" height="63.7" fill="#c64949"/>
<rect x="1352.2" y="740.0" width="25.8" height="413.7" fill="#186a8e"/>
<rect x="1386.0" y="1016.0" width="25.8" height="137.7" fill="#ffcd0a"/>
<rect x="1418.0" y="1054.0" width="25.8" height="99.7" fill="#c64949"/>
<rect x="1538.0" y="924.0" width="25.8" height="229.7" fill="#186a8e"/>
<rect x="1572.0" y="1084.0" width="25.8" height="69.7" fill="#ffcd0a"/>
<rect x="1606.0" y="1070.0" width="25.8" height="83.7" fill="#c64949"/>
<rect x="1708.2" y="1133.8" width="25.8" height="19.9" fill="#186a8e"/>
<rect x="1740.0" y="1148.0" width="25.8" height="5.7" fill="#ffcd0a"/>
<rect x="1774.0" y="1148.0" width="25.8" height="5.7" fill="#c64949"/>
<rect x="841.8" y="1155.7" width="2" height="18" fill="#a2a5ad"/>
<text x="843.8" y="1192" font-size="22" fill="#606060" text-anchor="middle" letter-spacing="-0.15">Oct 2017</text>
<rect x="1028.0" y="1155.7" width="2" height="18" fill="#a2a5ad"/>
<text x="1030.0" y="1192" font-size="22" fill="#606060" text-anchor="middle" letter-spacing="-0.15">Nov 2017</text>
<rect x="1210.0" y="1155.7" width="2" height="18" fill="#a2a5ad"/>
<text x="1212.0" y="1192" font-size="22" fill="#606060" text-anchor="middle" letter-spacing="-0.15">Dec 2017</text>
<rect x="1396.0" y="1155.7" width="2" height="18" fill="#a2a5ad"/>
<text x="1398.0" y="1192" font-size="22" fill="#606060" text-anchor="middle" letter-spacing="-0.15">Jan 2018</text>
<rect x="1584.0" y="1155.7" width="2" height="18" fill="#a2a5ad"/>
<text x="1586.0" y="1192" font-size="22" fill="#606060" text-anchor="middle" letter-spacing="-0.15">Feb 2018</text>
<rect x="1752.0" y="1155.7" width="2" height="18" fill="#a2a5ad"/>
<text x="1754.0" y="1192" font-size="22" fill="#606060" text-anchor="middle" letter-spacing="-0.15">Mar 2018</text>
<text transform="translate(626,837) rotate(-90)" font-size="24" fill="#707070" text-anchor="middle">Turnover</text>
<circle cx="969.7" cy="1246" r="11.7" fill="#186a8e"/>
<text x="996.6" y="1255.6" font-size="24" font-weight="bold" fill="#333" letter-spacing="-0.45" style="font-family:'DejaVu Sans Condensed','DejaVu Sans',sans-serif">Internet</text>
<circle cx="1149.8" cy="1246" r="11.7" fill="#ffcd0a"/>
<text x="1176.2" y="1255.6" font-size="24" font-weight="bold" fill="#333" letter-spacing="0.48" style="font-family:'DejaVu Sans Condensed','DejaVu Sans',sans-serif">Téléphone</text>
<circle cx="1361" cy="1246" r="11.7" fill="#c64949"/>
<text x="1387.6" y="1255.6" font-size="24" font-weight="bold" fill="#333" letter-spacing="0.2" style="font-family:'DejaVu Sans Condensed','DejaVu Sans',sans-serif">Courrier</text>
<text x="1847" y="1289.5" font-size="18" fill="#666" text-anchor="end">Marketing 1by1</text>
<rect x="2121.5" y="517.9" width="500" height="2" fill="#e0e0e3"/>
<rect x="2120.4" y="619.0" width="500" height="2" fill="#e0e0e3"/>
<rect x="2116" y="722.0" width="500" height="2" fill="#e0e0e3"/>
<rect x="2115" y="821.0" width="500" height="2" fill="#e0e0e3"/>
<rect x="2116.5" y="920.8" width="500" height="2" fill="#e0e0e3"/>
<rect x="2116" y="1020.7" width="500" height="2" fill="#e0e0e3"/>
<rect x="2114" y="1123.0" width="500" height="2" fill="#e0e0e3"/>
<rect x="2121.8" y="1228.0" width="500" height="2" fill="#c4c9dc"/>
<text x="2091.9" y="529.2" font-size="22" fill="#606060" text-anchor="end">45</text>
<text x="2091.9" y="630.3" font-size="22" fill="#606060" text-anchor="end">40</text>
<text x="2091.9" y="731.5" font-size="22" fill="#606060" text-anchor="end">35</text>
<text x="2091.9" y="832.6" font-size="22" fill="#606060" text-anchor="end">30</text>
<text x="2091.9" y="933.8" font-size="22" fill="#606060" text-anchor="end">25</text>
<text x="2091.9" y="1034.9" font-size="22" fill="#606060" text-anchor="end">20</text>
<text x="2091.9" y="1136.0" font-size="22" fill="#606060" text-anchor="end">15</text>
<text x="2091.9" y="1237.2" font-size="22" fill="#606060" text-anchor="end">10</text>
<rect x="2132.0" y="1230.0" width="2" height="18" fill="#a6a9b3"/>
<text x="2133.0" y="1265.3" font-size="22" fill="#606060" text-anchor="middle">Jan 2017</text>
<rect x="2504.0" y="1230.0" width="2" height="18" fill="#a6a9b3"/>
<text x="2506.2" y="1265.3" font-size="22" fill="#606060" text-anchor="middle">Jul 2017</text>
<text transform="translate(2044,873) rotate(-90)" font-size="24" fill="#707070" text-anchor="middle">Reorder rate</text>
<path id="curve" d="M2131.0,1165.8 C2132.2,1160.8 2135.7,1146.2 2138.0,1135.8 C2140.3,1125.4 2142.7,1114.6 2145.0,1103.4 C2147.3,1092.2 2149.7,1080.6 2152.0,1068.7 C2154.3,1056.8 2156.7,1044.5 2159.0,1031.9 C2161.3,1019.3 2163.7,1006.4 2166.0,993.3 C2168.3,980.2 2170.7,966.8 2173.0,953.1 C2175.3,939.5 2177.7,925.5 2180.0,911.4 C2182.3,897.3 2184.7,882.9 2187.0,868.8 C2189.3,854.7 2191.7,840.5 2194.0,826.8 C2196.3,813.1 2198.7,799.7 2201.0,786.7 C2203.3,773.7 2205.7,761.1 2208.0,749.0 C2210.3,736.9 2212.7,725.3 2215.0,714.2 C2217.3,703.1 2219.7,692.5 2222.0,682.6 C2224.3,672.7 2226.7,663.2 2229.0,654.6 C2231.3,646.0 2233.7,638.0 2236.0,630.7 C2238.3,623.4 2240.7,616.8 2243.0,611.0 C2245.3,605.2 2247.7,600.3 2250.0,596.2 C2252.3,592.1 2254.7,588.8 2257.0,586.2 C2259.3,583.6 2261.7,581.8 2264.0,580.4 C2266.3,579.0 2268.7,578.4 2271.0,578.1 C2273.3,577.8 2275.7,578.1 2278.0,578.7 C2280.3,579.3 2282.7,580.1 2285.0,581.5 C2287.3,582.9 2289.7,584.6 2292.0,587.2 C2294.3,589.8 2296.7,592.9 2299.0,597.1 C2301.3,601.3 2303.7,606.4 2306.0,612.5 C2308.3,618.6 2310.7,626.0 2313.0,633.8 C2315.3,641.6 2317.7,650.4 2320.0,659.2 C2322.3,668.0 2324.7,677.6 2327.0,686.8 C2329.3,696.0 2331.7,705.6 2334.0,714.6 C2336.3,723.6 2338.7,732.7 2341.0,740.8 C2343.3,748.9 2345.7,756.6 2348.0,763.3 C2350.3,770.0 2352.7,775.9 2355.0,781.1 C2357.3,786.3 2359.7,790.6 2362.0,794.5 C2364.3,798.4 2366.7,801.6 2369.0,804.4 C2371.3,807.2 2373.7,809.3 2376.0,811.3 C2378.3,813.2 2380.7,814.9 2383.0,816.1 C2385.3,817.3 2387.7,818.1 2390.0,818.6 C2392.3,819.1 2394.7,819.2 2397.0,818.9 C2399.3,818.6 2401.7,817.9 2404.0,816.8 C2406.3,815.7 2408.7,814.2 2411.0,812.3 C2413.3,810.4 2415.7,808.0 2418.0,805.2 C2420.3,802.4 2422.7,799.1 2425.0,795.6 C2427.3,792.1 2429.7,788.2 2432.0,784.4 C2434.3,780.6 2436.7,776.4 2439.0,772.6 C2441.3,768.8 2443.7,764.9 2446.0,761.5 C2448.3,758.1 2450.7,754.9 2453.0,752.3 C2455.3,749.7 2457.7,747.5 2460.0,745.7 C2462.3,743.9 2464.7,742.5 2467.0,741.4 C2469.3,740.3 2471.7,739.6 2474.0,739.1 C2476.3,738.6 2478.7,738.3 2481.0,738.2 C2483.3,738.1 2485.7,738.1 2488.0,738.3 C2490.3,738.4 2492.7,738.8 2495.0,739.1 C2497.3,739.4 2499.7,739.8 2502.0,740.3 C2504.3,740.8 2506.7,741.4 2509.0,742.2 C2511.3,743.0 2513.7,744.0 2516.0,745.3 C2518.3,746.6 2520.7,748.2 2523.0,750.1 C2525.3,752.0 2527.7,754.2 2530.0,756.5 C2532.3,758.8 2534.7,761.3 2537.0,763.8 C2539.3,766.3 2541.7,768.9 2544.0,771.3 C2546.3,773.7 2549.8,777.0 2551.0,778.1" fill="none" stroke="#979797" stroke-width="2"/>
<path d="M2182,896.5 L2186.2,903.5 L2177.8,903.5Z" fill="#9a9a9a"/>
</svg>
</body></html>
